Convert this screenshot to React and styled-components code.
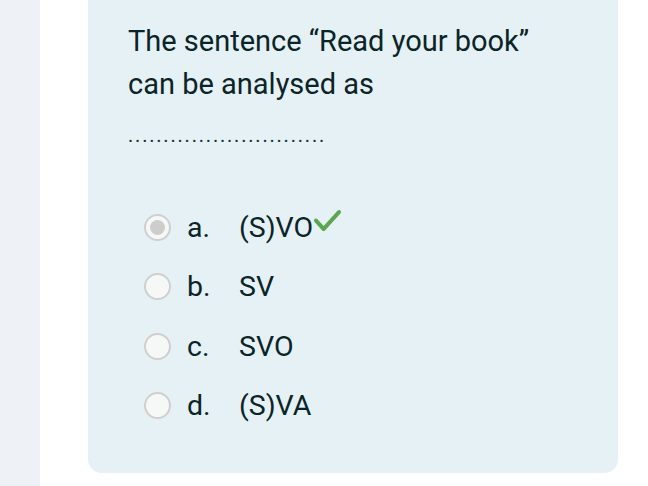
import React from 'react'
import styled, { createGlobalStyle } from 'styled-components'

const Global = createGlobalStyle`
  html, body {
    margin: 0;
    padding: 0;
    background: #ffffff;
  }
  body {
    font-family: Roboto, "Liberation Sans", sans-serif;
  }
`

const Page = styled.div`
  display: flex;
  height: 486px;
  overflow: hidden;
`

const SideStrip = styled.div`
  width: 40px;
  flex-shrink: 0;
  background: #eef1f5;
`

const Main = styled.div`
  flex: 1;
  padding: 0 30px 13px 48px;
  display: flex;
`

const Card = styled.div`
  width: 530px;
  margin-top: -16px;
  background: #e5f1f4;
  border-radius: 14px;
  padding: 36px 40px 0 40px;
  box-sizing: border-box;
`

const Question = styled.div`
  color: #0b2427;
  font-size: 29px;
  line-height: 43px;
`

const Blank = styled.div`
  color: #1d2e30;
  font-size: 20px;
  letter-spacing: 1.8px;
  line-height: 20px;
  margin-top: 19px;
  white-space: nowrap;
`

const Options = styled.div`
  display: flex;
  flex-direction: column;
  margin-top: 53px;
  padding-left: 16px;
`

const Option = styled.label`
  display: flex;
  align-items: center;
  height: 59.3px;
  color: #0b2427;
  font-size: 28.5px;
`

const Radio = styled.span`
  width: 23px;
  height: 23px;
  border-radius: 50%;
  border: 2px solid #cfcfcf;
  background: #f6f7f7;
  display: flex;
  align-items: center;
  justify-content: center;
  flex-shrink: 0;
  margin-right: 16px;

  &::after {
    content: '';
    width: 15px;
    height: 15px;
    border-radius: 50%;
    background: ${p => (p.$checked ? '#cdcdcd' : 'transparent')};
  }
`

const Letter = styled.span`
  width: 52px;
`

const Answer = styled.span`
  display: flex;
  align-items: center;
`

const CheckIcon = styled.svg`
  width: 27px;
  height: 21px;
  margin-top: -14px;
  margin-left: 1px;
`

const Check = () => (
  <CheckIcon viewBox="0 96 448 320" preserveAspectRatio="none">
    <path
      fill="#5da552"
      d="M438.6 105.4c12.5 12.5 12.5 32.8 0 45.3l-256 256c-12.5 12.5-32.8 12.5-45.3 0l-128-128c-12.5-12.5-12.5-32.8 0-45.3s32.8-12.5 45.3 0L160 338.7 393.4 105.4c12.5-12.5 32.8-12.5 45.3 0z"
    />
  </CheckIcon>
)

const options = [
  { letter: 'a.', text: '(S)VO', checked: true },
  { letter: 'b.', text: 'SV' },
  { letter: 'c.', text: 'SVO' },
  { letter: 'd.', text: '(S)VA' },
]

export default function App() {
  return (
    <>
      <Global />
      <Page>
        <SideStrip />
        <Main>
          <Card>
            <Question>
              The sentence “Read your book”
              <br />
              can be analysed as
            </Question>
            <Blank>{'.'.repeat(28)}</Blank>
            <Options>
              {options.map(o => (
                <Option key={o.letter}>
                  <Radio $checked={o.checked} />
                  <Letter>{o.letter}</Letter>
                  <Answer>
                    {o.text}
                    {o.checked && <Check />}
                  </Answer>
                </Option>
              ))}
            </Options>
          </Card>
        </Main>
      </Page>
    </>
  )
}
